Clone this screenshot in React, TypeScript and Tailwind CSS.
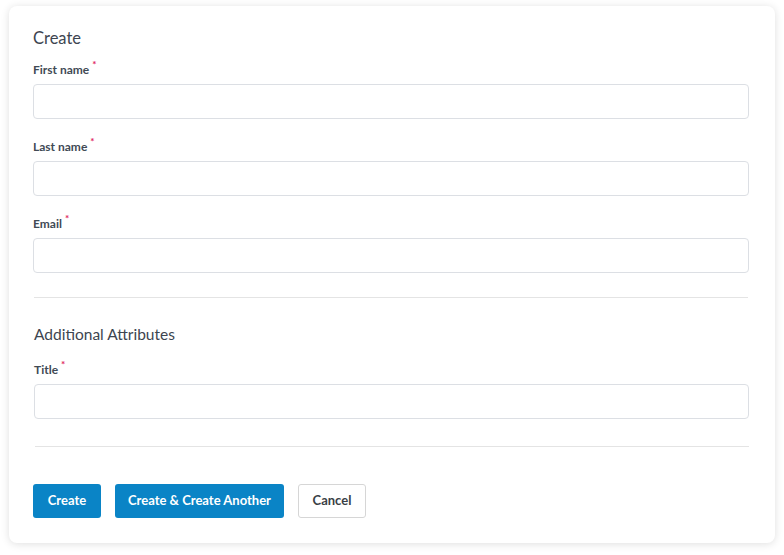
import React from "react"

// 必須ラベル
const Label = ({ text }: { text: string }) => (
  <div className="flex items-start h-4 text-[12px] leading-4 font-bold text-[#414a55] mb-[6px]">
    <span>{text}</span>
    <span className="text-[#e0245e] text-[10px] leading-[10px] ml-[3px] -mt-[3px]">*</span>
  </div>
)

const Field = ({ label, className = "" }: { label: string; className?: string }) => (
  <div className={className}>
    <Label text={label} />
    <input
      type="text"
      className="block w-full h-[35px] rounded-[4px] border border-[#dcdfe4] bg-white px-3 text-[13px] outline-none"
    />
  </div>
)

export default function App() {
  return (
    <div className="min-h-[555px] w-[784px] bg-white pt-[6px] pl-[9px]" style={{ fontFamily: "Lato, 'Open Sans', sans-serif" }}>
      <div className="w-[766px] h-[537px] rounded-[8px] bg-white shadow-[0_1px_8px_rgba(0,0,0,0.13)] pl-[24px] pr-[26px] pt-[20px]">
        <h2 className="text-[16.5px] leading-6 text-[#3d4550]">Create</h2>

        <Field label="First name" className="mt-[12px]" />
        <Field label="Last name" className="mt-[20px]" />
        <Field label="Email" className="mt-[20px]" />

        <div className="mt-[24px] h-px bg-[#e4e4e4] ml-px mr-px" />

        {/* 追加属性 */}
        <div className="pl-px">
          <h3 className="mt-[25px] text-[15.5px] leading-[22px] text-[#3d4550]">Additional Attributes</h3>
          <Field label="Title" className="mt-[17px]" />
          <div className="mt-[27px] h-px bg-[#e4e4e4] ml-px" />
        </div>

        <div className="mt-[37px] flex gap-[14px]">
          <button className="h-[34px] w-[68px] rounded-[3px] bg-[#0a84c6] text-white text-[13px] font-bold">Create</button>
          <button className="h-[34px] w-[169px] rounded-[3px] bg-[#0a84c6] text-white text-[13px] font-bold">Create &amp; Create Another</button>
          <button className="h-[34px] w-[68px] rounded-[3px] border border-[#d6d6d6] bg-white text-[#3a3f46] text-[13px] font-bold">Cancel</button>
        </div>
      </div>
    </div>
  )
}
